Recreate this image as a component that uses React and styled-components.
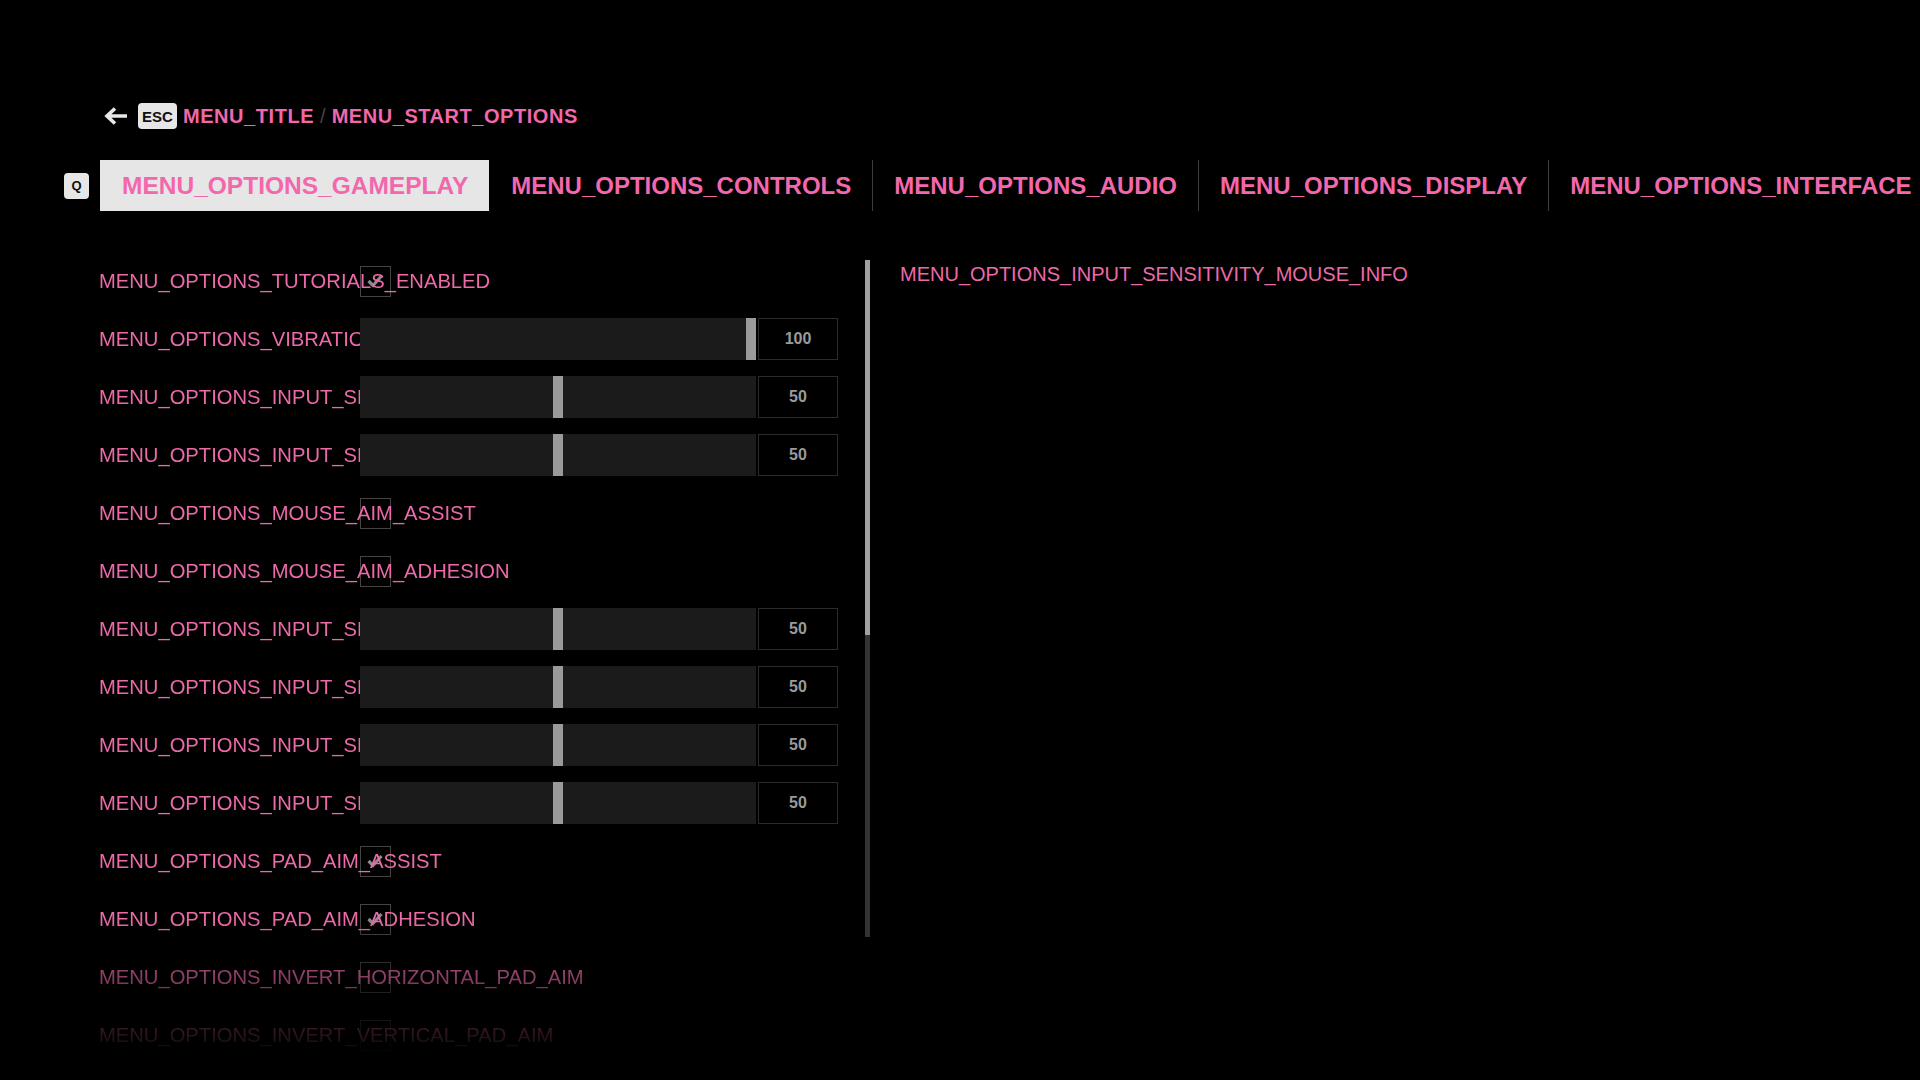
import React from 'react';
import styled, { createGlobalStyle } from 'styled-components';

const PINK = '#f367ac';
const LABEL_PINK = '#ec6aa9';

const GlobalStyle = createGlobalStyle`
    html, body {
        margin: 0;
        padding: 0;
        background: #000;
        overflow: hidden;
    }
    body {
        font-family: "Liberation Sans", Arial, sans-serif;
    }
`;

const Page = styled.div`
    width: 1920px;
    height: 1080px;
    background: #000;
    overflow: hidden;
    display: flex;
    flex-direction: column;
`;

const Breadcrumb = styled.div`
    display: flex;
    align-items: center;
    margin: 103px 0 0 103px;
    height: 26px;
`;

const BackIcon = styled.svg`
    width: 26px;
    height: 20px;
    margin-right: 9px;
`;

const Key = styled.span`
    display: inline-flex;
    align-items: center;
    justify-content: center;
    background: #e6e6e6;
    color: #111;
    border-radius: 4px;
    font-weight: 700;
    font-size: ${p => p.$small ? '13px' : '15px'};
    width: ${p => p.$w}px;
    height: 26px;
    flex-shrink: 0;
`;

const Crumb = styled.span`
    color: ${PINK};
    font-weight: 700;
    font-size: 20px;
    letter-spacing: 0.55px;
`;

const Slash = styled.span`
    color: #444;
    font-weight: 400;
    font-size: 20px;
    margin: 0 6px;
`;

const TabBar = styled.div`
    display: flex;
    align-items: center;
    margin: 31px 0 0 64px;
    height: 51px;
    white-space: nowrap;
    overflow: hidden;
`;

const Tab = styled.div`
    height: 51px;
    display: flex;
    align-items: center;
    padding: 0 21px;
    font-size: ${p => p.$active ? '24.5px' : '24px'};
    font-weight: 700;
    color: ${PINK};
    background: ${p => p.$active ? '#e6e6e6' : 'transparent'};
    border-left: 1px solid ${p => p.$sep ? '#3d3d3d' : 'transparent'};
    flex-shrink: 0;
`;

const Content = styled.div`
    display: flex;
    align-items: flex-start;
    margin-top: 41px;
    flex: 1;
    min-height: 0;
`;

const List = styled.div`
    margin-left: 99px;
    width: 739px;
    height: 828px;
    overflow: hidden;
    flex-shrink: 0;
    -webkit-mask-image: linear-gradient(to bottom, #000 80.5%, transparent 97.5%);
    mask-image: linear-gradient(to bottom, #000 80.5%, transparent 97.5%);
`;

const Row = styled.div`
    display: flex;
    align-items: center;
    height: 58px;
`;

const Label = styled.div`
    width: 261px;
    flex-shrink: 0;
    white-space: nowrap;
    font-size: 20.2px;
    color: ${LABEL_PINK};
    z-index: 1;
`;

const CheckBox = styled.div`
    width: 29px;
    height: 29px;
    border: 1px solid #444;
    display: flex;
    align-items: center;
    justify-content: center;
    flex-shrink: 0;
    z-index: 0;
`;

const CheckIcon = styled.svg`
    width: 16px;
    height: 14px;
    margin-left: -2px;
`;

const SliderTrack = styled.div`
    position: relative;
    width: 396px;
    height: 42px;
    background: #1b1b1b;
    flex-shrink: 0;
    z-index: 2;
`;

const SliderThumb = styled.div`
    position: absolute;
    top: 0;
    width: 10px;
    height: 42px;
    background: #9a9a9a;
`;

const ValueBox = styled.div`
    width: 78px;
    height: 40px;
    margin-left: 2px;
    border: 1px solid #2b2b2b;
    background: #000;
    display: flex;
    align-items: center;
    justify-content: center;
    color: #9a9a9a;
    font-weight: 700;
    font-size: 16px;
    flex-shrink: 0;
    z-index: 2;
`;

const ScrollTrack = styled.div`
    width: 5px;
    height: 677px;
    margin: 8px 0 0 27px;
    background: #333;
    flex-shrink: 0;
`;

const ScrollThumb = styled.div`
    width: 5px;
    height: 375px;
    background: #a0a0a0;
`;

const Info = styled.div`
    margin: 10px 0 0 30px;
    font-size: 20px;
    line-height: 24px;
    color: ${LABEL_PINK};
    white-space: nowrap;
`;

const settings = [
    { label: 'MENU_OPTIONS_TUTORIALS_ENABLED', type: 'check', value: true },
    { label: 'MENU_OPTIONS_VIBRATION', type: 'slider', value: 100 },
    { label: 'MENU_OPTIONS_INPUT_SENSITIVITY_MOUSE_X', type: 'slider', value: 50 },
    { label: 'MENU_OPTIONS_INPUT_SENSITIVITY_MOUSE_Y', type: 'slider', value: 50 },
    { label: 'MENU_OPTIONS_MOUSE_AIM_ASSIST', type: 'check', value: false },
    { label: 'MENU_OPTIONS_MOUSE_AIM_ADHESION', type: 'check', value: false },
    { label: 'MENU_OPTIONS_INPUT_SENSITIVITY_PAD_X', type: 'slider', value: 50 },
    { label: 'MENU_OPTIONS_INPUT_SENSITIVITY_PAD_Y', type: 'slider', value: 50 },
    { label: 'MENU_OPTIONS_INPUT_SENSITIVITY_PAD_AIM_X', type: 'slider', value: 50 },
    { label: 'MENU_OPTIONS_INPUT_SENSITIVITY_PAD_AIM_Y', type: 'slider', value: 50 },
    { label: 'MENU_OPTIONS_PAD_AIM_ASSIST', type: 'check', value: true },
    { label: 'MENU_OPTIONS_PAD_AIM_ADHESION', type: 'check', value: true },
    { label: 'MENU_OPTIONS_INVERT_HORIZONTAL_PAD_AIM', type: 'check', value: false },
    { label: 'MENU_OPTIONS_INVERT_VERTICAL_PAD_AIM', type: 'check', value: false },
];

const tabs = [
    'MENU_OPTIONS_GAMEPLAY',
    'MENU_OPTIONS_CONTROLS',
    'MENU_OPTIONS_AUDIO',
    'MENU_OPTIONS_DISPLAY',
    'MENU_OPTIONS_INTERFACE',
];

function Control({ item }) {
    if (item.type === 'check') {
        return (
            <CheckBox>
                {item.value && (
                    <CheckIcon viewBox="0 0 16 14">
                        <path d="M1.5 7 L6 11.5 L14.5 2" fill="none" stroke="#8a8a8a" strokeWidth="3.2" />
                    </CheckIcon>
                )}
            </CheckBox>
        );
    }
    return (
        <>
            <SliderTrack>
                <SliderThumb style={{ left: `${(item.value / 100) * 386}px` }} />
            </SliderTrack>
            <ValueBox>{item.value}</ValueBox>
        </>
    );
}

export default function App() {
    return (
        <Page>
            <GlobalStyle />
            <Breadcrumb>
                <BackIcon viewBox="0 0 26 20">
                    <path d="M24 10 H5 M12 2.5 L4 10 L12 17.5" fill="none" stroke="#e8e8e8" strokeWidth="3.6" />
                </BackIcon>
                <Key $w={39}>ESC</Key>
                <Crumb style={{ marginLeft: 6 }}>MENU_TITLE</Crumb>
                <Slash>/</Slash>
                <Crumb>MENU_START_OPTIONS</Crumb>
            </Breadcrumb>

            <TabBar>
                <Key $w={25} $small style={{ marginRight: 11 }}>Q</Key>
                {tabs.map((t, i) => (
                    <Tab key={t} $active={i === 0} $sep={i > 1}>{t}</Tab>
                ))}
            </TabBar>

            <Content>
                <List>
                    {settings.map(item => (
                        <Row key={item.label}>
                            <Label>{item.label}</Label>
                            <Control item={item} />
                        </Row>
                    ))}
                </List>
                <ScrollTrack>
                    <ScrollThumb />
                </ScrollTrack>
                <Info>MENU_OPTIONS_INPUT_SENSITIVITY_MOUSE_INFO</Info>
            </Content>
        </Page>
    );
}
